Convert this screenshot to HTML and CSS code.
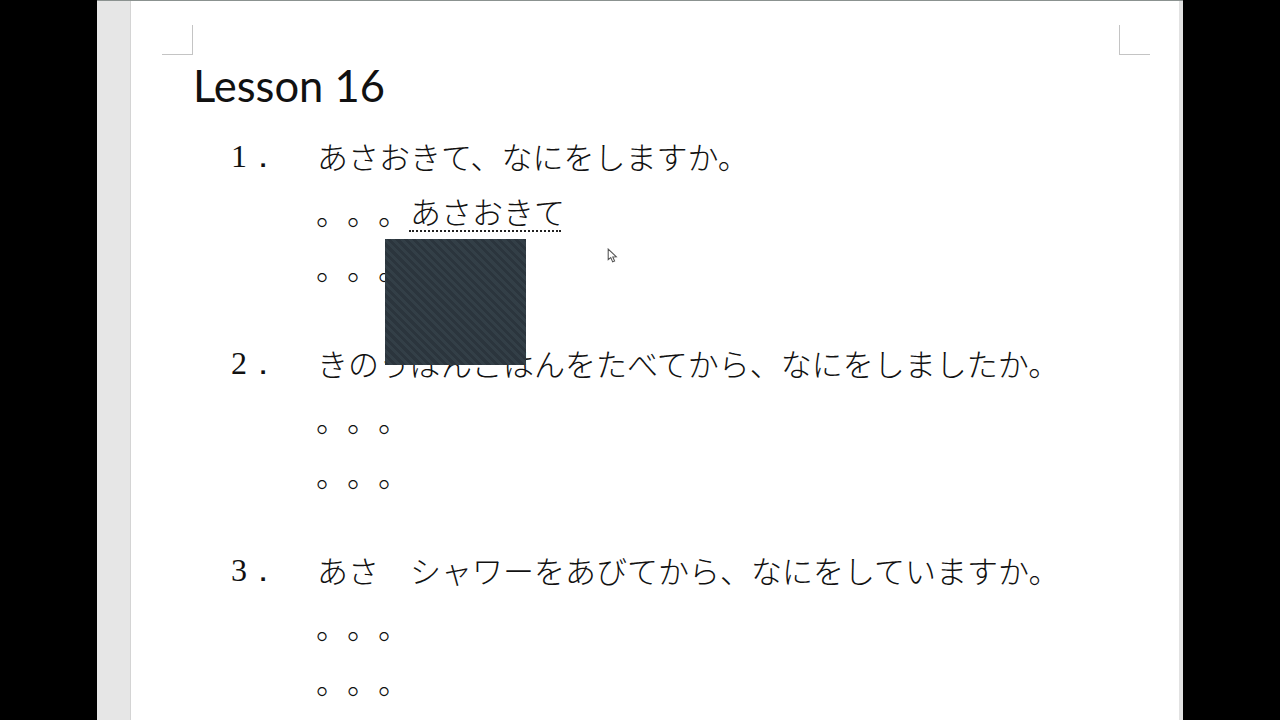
FILE: index.html
```html
<!DOCTYPE html>
<html lang="ja">
<head>
    <meta charset="UTF-8">
    <title>Lesson 16</title>
    <link rel="stylesheet" href="styles.css">
</head>
<body>
    <div class="window">
        <div class="gutter"></div>
        <div class="page">
            <span class="crop crop-left"></span>
            <span class="crop crop-right"></span>

            <h1 class="title">Lesson 16</h1>

            <div class="lesson">
                <div class="question">
                    <span class="num">1．</span>
                    <span class="text">あさおきて、なにをしますか。</span>
                </div>
                <div class="answer">。。。<span class="typing">あさおきて</span></div>
                <div class="answer">。。。</div>
            </div>

            <div class="lesson">
                <div class="question">
                    <span class="num">2．</span>
                    <span class="text">きのうばんごはんをたべてから、なにをしましたか。</span>
                </div>
                <div class="answer">。。。</div>
                <div class="answer">。。。</div>
            </div>

            <div class="lesson">
                <div class="question">
                    <span class="num">3．</span>
                    <span class="text">あさ　シャワーをあびてから、なにをしていますか。</span>
                </div>
                <div class="answer">。。。</div>
                <div class="answer">。。。</div>
            </div>

            <div class="cover"></div>
            <svg class="cursor" width="12" height="16" viewBox="0 0 11 15">
                <path d="M1 1 L1 11 L3.4 9 L5.2 13 L7 12.2 L5.3 8.4 L8.6 8.2 Z" fill="#fff" stroke="#555" stroke-width="1"/>
            </svg>
        </div>
        <div class="edge"></div>
    </div>
</body>
</html>
```

FILE: styles.css
```css
html, body {
    margin: 0;
    padding: 0;
    height: 100%;
    background-color: #000;
    overflow: hidden;
}

.window {
    display: flex;
    height: 720px;
    margin-left: 97px;
    width: 1086px;
    border-top: 1px solid #8b9290;
    box-sizing: border-box;
}

.gutter {
    width: 33px;
    background-color: #e6e6e6;
    border-right: 1px solid #d4d4d4;
}

.page {
    position: relative;
    flex: 1;
    background-color: #fff;
    padding: 60px 0 0 62px;
    overflow: hidden;
    color: #111;
    font-family: "Noto Sans CJK JP", "Liberation Serif", serif;
    font-weight: 300;
    text-spacing-trim: space-all;
}

.edge {
    width: 4px;
    background-color: #e2e2e2;
}

/* page margin marks */
.crop {
    position: absolute;
    top: 24px;
    width: 30px;
    height: 29px;
    border-bottom: 1px solid #c4c4c4;
}

.crop-left {
    left: 31px;
    border-right: 1px solid #c4c4c4;
}

.crop-right {
    left: 988px;
    border-left: 1px solid #c4c4c4;
}

.title {
    margin: 0 0 24px 0;
    font-family: Lato, "Liberation Sans", sans-serif;
    font-size: 43.5px;
    font-weight: 400;
    line-height: 48px;
    color: #111;
}

.lesson {
    margin-bottom: 41px;
    font-size: 31px;
}

.question {
    display: flex;
    height: 46px;
    line-height: 46px;
    margin-bottom: 10px;
}

.num {
    width: 86px;
    margin-left: 38px;
    font-family: "Liberation Serif", serif;
    font-weight: 400;
    font-size: 32px;
}

.text {
    white-space: nowrap;
}

.answer {
    height: 55px;
    line-height: 46px;
    margin-left: 123px;
    white-space: nowrap;
}

.typing {
    display: inline-block;
    width: 151px;
    height: 37px;
    line-height: 36px;
    margin-bottom: 3px;
    padding-left: 1px;
    border-bottom: 2px dotted #222;
    vertical-align: bottom;
}

/* dark box sitting over the text */
.cover {
    position: absolute;
    left: 254px;
    top: 238px;
    width: 141px;
    height: 126px;
    background: repeating-linear-gradient(45deg, #2b353d 0, #2b353d 3px, #333f47 3px, #333f47 6px);
}

.cursor {
    position: absolute;
    left: 476px;
    top: 247px;
}
```
